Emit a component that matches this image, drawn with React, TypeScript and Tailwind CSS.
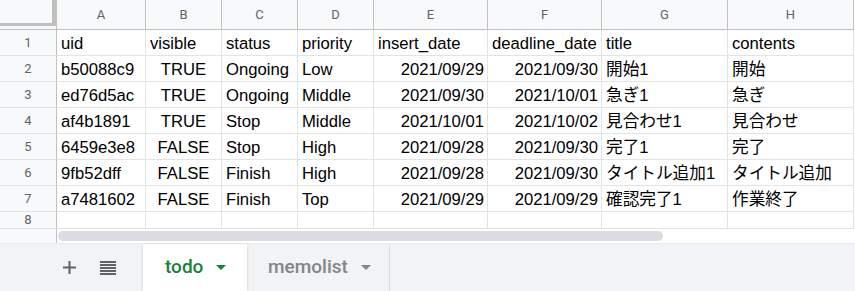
import React from "react";

const colWidths = ["w-[89px]", "w-[76px]", "w-[76px]", "w-[76px]", "w-[114px]", "w-[114px]", "w-[126px]", "w-[126px]"];
const letters = ["A", "B", "C", "D", "E", "F", "G", "H"];
const aligns = ["left", "center", "left", "left", "right", "right", "left", "left"];

const header = ["uid", "visible", "status", "priority", "insert_date", "deadline_date", "title", "contents"];

const rows = [
  ["b50088c9", "TRUE", "Ongoing", "Low", "2021/09/29", "2021/09/30", "開始1", "開始"],
  ["ed76d5ac", "TRUE", "Ongoing", "Middle", "2021/09/30", "2021/10/01", "急ぎ1", "急ぎ"],
  ["af4b1891", "TRUE", "Stop", "Middle", "2021/10/01", "2021/10/02", "見合わせ1", "見合わせ"],
  ["6459e3e8", "FALSE", "Stop", "High", "2021/09/28", "2021/09/30", "完了1", "完了"],
  ["9fb52dff", "FALSE", "Finish", "High", "2021/09/28", "2021/09/30", "タイトル追加1", "タイトル追加"],
  ["a7481602", "FALSE", "Finish", "Top", "2021/09/29", "2021/09/29", "確認完了1", "作業終了"],
];

const font = "font-['Liberation_Sans','Noto_Sans_CJK_JP',sans-serif]";
const uiFont = "font-['Roboto','Liberation_Sans',sans-serif]";

function Cell({ w, align, children }: { w: string; align: string; children?: React.ReactNode }) {
  const justify = align === "right" ? "justify-end pr-[3px]" : align === "center" ? "justify-center" : "justify-start pl-[4px]";
  return (
    <div className={`${w} shrink-0 h-full flex items-end pb-[2px] border-r border-b border-[#e2e3e3] overflow-hidden whitespace-nowrap ${justify}`}>
      <span className="leading-[19px]">{children}</span>
    </div>
  );
}

function RowNum({ n }: { n: number }) {
  return (
    <div className={`w-[57px] shrink-0 h-full flex items-center justify-center bg-[#f8f9fa] border-r border-r-[#c0c0c0] border-b border-b-[#e2e3e3] text-[13px] text-[#5f6368] ${uiFont}`}>
      {n}
    </div>
  );
}

function Caret({ color }: { color: string }) {
  return (
    <svg width="10" height="5" viewBox="0 0 10 5" className="shrink-0">
      <path d="M0 0 L10 0 L5 5 Z" fill={color} />
    </svg>
  );
}

export default function App() {
  return (
    <div className="w-[855px] h-[291px] bg-white overflow-hidden flex flex-col">
      {/* column header */}
      <div className="flex h-[30px] shrink-0">
        <div className="w-[57px] h-full shrink-0 bg-[#f8f9fa] border-r border-b border-[#c0c0c0]">
          <div className="w-[56px] h-[26px] border-r-4 border-b-[3px] border-[#c0c0c0]" />
        </div>
        {letters.map((l, i) => (
          <div
            key={l}
            className={`${colWidths[i]} shrink-0 h-full flex items-center justify-center bg-[#f8f9fa] border-r border-b border-[#c0c0c0] text-[13px] text-[#5f6368] ${uiFont}`}
          >
            {l}
          </div>
        ))}
      </div>

      {/* data */}
      <div className={`text-[16.67px] text-black ${font}`}>
        <div className="flex h-[26px]">
          <RowNum n={1} />
          {header.map((h, i) => (
            <Cell key={h} w={colWidths[i]} align="left">
              {h}
            </Cell>
          ))}
        </div>
        {rows.map((r, ri) => (
          <div key={ri} className="flex h-[26px]">
            <RowNum n={ri + 2} />
            {r.map((v, i) => (
              <Cell key={i} w={colWidths[i]} align={aligns[i]}>
                {v}
              </Cell>
            ))}
          </div>
        ))}
        <div className="flex h-[17px]">
          <div className={`w-[57px] shrink-0 h-full flex items-end justify-center pb-[1px] bg-[#f8f9fa] border-r border-r-[#c0c0c0] border-b border-b-[#e2e3e3] text-[13px] leading-[14px] text-[#5f6368] ${uiFont}`}>
            8
          </div>
          {colWidths.map((w, i) => (
            <div key={i} className={`${w} shrink-0 h-full border-r border-b border-[#e2e3e3]`} />
          ))}
        </div>
      </div>

      {/* horizontal scrollbar */}
      <div className="flex h-[14px] shrink-0">
        <div className="w-[57px] shrink-0 h-full bg-[#f8f9fa] border-r border-[#c0c0c0]" />
        <div className="flex-1 h-full flex items-center pl-[1px]">
          <div className="w-[605px] h-[10px] rounded-full bg-[#dadce0]" />
        </div>
      </div>

      {/* sheet tabs */}
      <div className={`flex-1 flex items-stretch bg-[#f1f3f4] border-t border-[#e8eaed] ${uiFont}`}>
        <div className="flex items-center pl-[63px] w-[143px] shrink-0">
          <svg width="13" height="13" viewBox="0 0 13 13">
            <rect x="0" y="5.5" width="13" height="2" fill="#5f6368" />
            <rect x="5.5" y="0" width="2" height="13" fill="#5f6368" />
          </svg>
          <svg width="16" height="14" viewBox="0 0 16 14" className="ml-[24px]">
            <rect x="0" y="0" width="16" height="2" fill="#5f6368" />
            <rect x="0" y="3" width="16" height="2" fill="#5f6368" />
            <rect x="0" y="6" width="16" height="2" fill="#5f6368" />
            <rect x="0" y="9" width="16" height="2" fill="#5f6368" />
            <rect x="0" y="12" width="16" height="2" fill="#5f6368" />
          </svg>
        </div>
        <div className="w-[104px] shrink-0 bg-white flex items-center pl-[22px] gap-[13px] shadow-[0_1px_3px_rgba(60,64,67,0.2)]">
          <span className="text-[19px] font-medium text-[#188038] leading-none pb-[2px]">todo</span>
          <Caret color="#188038" />
        </div>
        <div className="w-[143px] shrink-0 flex items-center pl-[21px] gap-[13px] border-r border-[#dadce0]">
          <span className="text-[19px] font-medium text-[#80868b] leading-none pb-[2px]">memolist</span>
          <Caret color="#80868b" />
        </div>
      </div>
    </div>
  );
}
